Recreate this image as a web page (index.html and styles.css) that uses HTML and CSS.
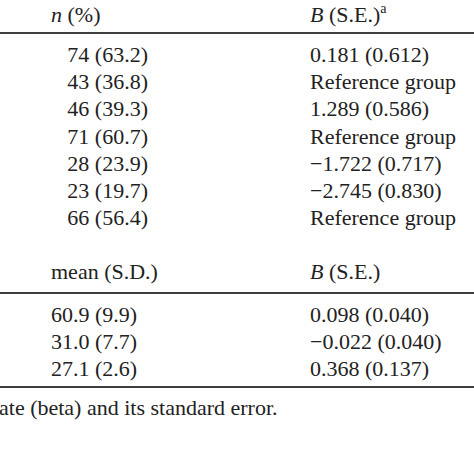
FILE: index.html
```html
<!DOCTYPE html>
<html>
<head>
<meta charset="utf-8">
<link rel="stylesheet" href="styles.css">
</head>
<body>
<div class="table">
  <div class="row head first-head">
    <div class="c1 hl"><i>n</i> (%)</div>
    <div class="c2"><i>B</i> (S.E.)<sup>a</sup></div>
  </div>
  <div class="rule"></div>
  <div class="body">
    <div class="row"><div class="c1 num">74 (63.2)</div><div class="c2">0.181 (0.612)</div></div>
    <div class="row"><div class="c1 num">43 (36.8)</div><div class="c2">Reference group</div></div>
    <div class="row"><div class="c1 num">46 (39.3)</div><div class="c2">1.289 (0.586)</div></div>
    <div class="row"><div class="c1 num">71 (60.7)</div><div class="c2">Reference group</div></div>
    <div class="row"><div class="c1 num">28 (23.9)</div><div class="c2">−1.722 (0.717)</div></div>
    <div class="row"><div class="c1 num">23 (19.7)</div><div class="c2">−2.745 (0.830)</div></div>
    <div class="row"><div class="c1 num">66 (56.4)</div><div class="c2">Reference group</div></div>
    <div class="row blank"><div class="c1"></div><div class="c2"></div></div>
  </div>
  <div class="row head second-head">
    <div class="c1 hl">mean (S.D.)</div>
    <div class="c2"><i>B</i> (S.E.)</div>
  </div>
  <div class="rule"></div>
  <div class="body">
    <div class="row"><div class="c1 hl">60.9 (9.9)</div><div class="c2">0.098 (0.040)</div></div>
    <div class="row"><div class="c1 hl">31.0 (7.7)</div><div class="c2">−0.022 (0.040)</div></div>
    <div class="row"><div class="c1 hl">27.1 (2.6)</div><div class="c2">0.368 (0.137)</div></div>
  </div>
  <div class="rule bottom"></div>
  <p class="note">ate (beta) and its standard error.</p>
</div>
</body>
</html>
```

FILE: styles.css
```css
html, body {
  margin: 0;
  padding: 0;
  background: #ffffff;
}

body {
  font-family: "Liberation Serif", "Times New Roman", serif;
  font-size: 22px;
  color: #222222;
  width: 474px;
  height: 474px;
  overflow: hidden;
}

.table {
  display: flex;
  flex-direction: column;
}

.row {
  display: grid;
  grid-template-columns: 310px 1fr;
  line-height: 27.2px;
  height: 27.2px;
  white-space: nowrap;
}

.first-head {
  padding-top: 1px;
  padding-bottom: 3.8px;
}

.second-head {
  padding-bottom: 6.2px;
}

.hl {
  padding-left: 51px;
}

.num {
  text-align: right;
  padding-right: 162px;
}

.c2 {
  padding-left: 0;
}

sup {
  font-size: 14px;
  line-height: 0;
  vertical-align: 9px;
}

.rule {
  height: 2px;
  background: #3e3e3e;
}

.body {
  display: flex;
  flex-direction: column;
  padding-top: 7px;
}

.body:last-of-type {
  padding-bottom: 3.4px;
}

.bottom {
  margin-top: 3.4px;
}

.note {
  margin: 0;
  padding-top: 6px;
  line-height: 27.2px;
  white-space: nowrap;
  margin-left: -1px;
}
```
